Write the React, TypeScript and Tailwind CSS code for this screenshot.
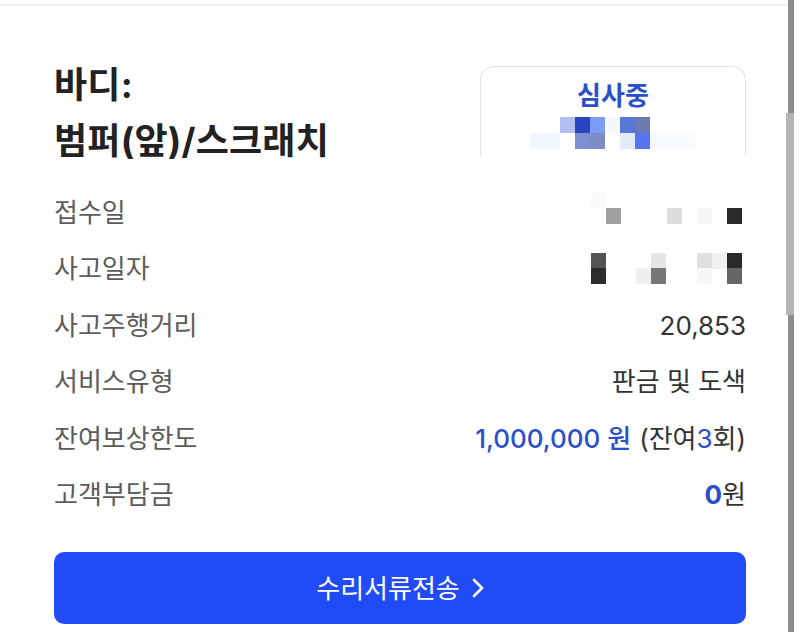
import React from "react";

type Block = [number, number, string];

const font = {
  fontFamily: 'Inter, "Noto Sans CJK KR", "Noto Sans", sans-serif',
};

const statusBlocks: Block[] = [
  [49, 16, "#f1f7ff"],
  [64, 16, "#f1f7ff"],
  [79, 0, "#b3bff0"],
  [94, 0, "#2b45c0"],
  [109, 0, "#7b9df2"],
  [94, 16, "#7d8ed2"],
  [109, 16, "#7c8cc4"],
  [124, 0, "#f5f8ff"],
  [139, 0, "#5a76d6"],
  [154, 0, "#6b7aaf"],
  [139, 16, "#e3eaf8"],
  [154, 16, "#5a73f2"],
  [169, 16, "#f6f9fe"],
  [184, 16, "#f6f9fe"],
  [199, 16, "#f8fafe"],
];

const receiptBlocks: Block[] = [
  [5, 9, "#f9f9f9"],
  [20, 24, "#a0a0a0"],
  [81, 24, "#dddddd"],
  [111, 24, "#f7f7f7"],
  [141, 24, "#2a2a2a"],
];

const accidentBlocks: Block[] = [
  [5, 12, "#555555"],
  [5, 27, "#2c2c2c"],
  [50, 27, "#eeeeee"],
  [65, 12, "#e6e6e6"],
  [65, 27, "#777777"],
  [111, 12, "#e0e0e0"],
  [111, 27, "#f6f6f6"],
  [126, 12, "#f1f1f1"],
  [141, 12, "#2a2a2a"],
  [141, 27, "#666666"],
];

const Mosaic = ({
  blocks,
  width,
  height,
}: {
  blocks: Block[];
  width: number;
  height: number;
}) => (
  <svg width={width} height={height} className="block">
    {blocks.map(([x, y, c], i) => (
      <rect key={i} x={x} y={y} width={15} height={16} fill={c} />
    ))}
  </svg>
);

const Row = ({
  label,
  children,
}: {
  label: string;
  children: React.ReactNode;
}) => (
  <div className="flex h-[56.5px] items-center justify-between">
    <span className="text-[26px] text-[#5c5c5c]">{label}</span>
    <div className="flex h-full items-center text-[26px] text-[#333]">
      {children}
    </div>
  </div>
);

const App = () => {
  return (
    <div className="flex h-[632px] w-full bg-white" style={font}>
      <div className="w-[788px] shrink-0">
        <div className="mt-[4px] h-[2px] bg-[#f0f0f0]" />
        <div className="pl-[54px] pr-[42px] pt-[51px]">
          <div className="flex items-start justify-between">
            <h1 className="text-[36px] font-bold leading-[56px] tracking-[0.2px] text-[#222]">
              바디:
              <br />
              범퍼(앞)/스크래치
            </h1>
            <div className="mt-[9px] h-[90px] w-[266px] rounded-t-[14px] border border-b-0 border-[#e3e3e3] pt-[14px]">
              <div className="text-center text-[26px] font-bold leading-[30px] text-[#2b4fc8]">
                심사중
              </div>
              <div className="mt-[6px]">
                <Mosaic blocks={statusBlocks} width={264} height={32} />
              </div>
            </div>
          </div>

          <div className="mt-[15px]">
            <Row label="접수일">
              <Mosaic blocks={receiptBlocks} width={160} height={56} />
            </Row>
            <Row label="사고일자">
              <Mosaic blocks={accidentBlocks} width={160} height={56} />
            </Row>
            <Row label="사고주행거리">20,853</Row>
            <Row label="서비스유형">판금 및 도색</Row>
            <Row label="잔여보상한도">
              <span className="font-medium text-[#2b4fc8]">1,000,000 원</span>
              <span className="ml-[8px]">
                (잔여<span className="text-[#2b4fc8]">3</span>회)
              </span>
            </Row>
            <Row label="고객부담금">
              <span className="font-bold text-[#2b4fc8]">0</span>원
            </Row>
          </div>

          <button className="mt-[29px] flex h-[72px] w-full items-center justify-center gap-[12px] rounded-[10px] bg-[#214cf5] text-[26px] text-white">
            수리서류전송
            <svg width="12" height="20" viewBox="0 0 12 20">
              <polyline
                points="2,2 10,10 2,18"
                fill="none"
                stroke="white"
                strokeWidth="2.6"
                strokeLinecap="round"
                strokeLinejoin="round"
              />
            </svg>
          </button>
        </div>
      </div>
      {/* scrollbar strip on the right edge */}
      <div className="flex h-[632px] w-[6px] shrink-0 flex-col bg-[#8c8c8c]">
        <div className="ml-[-2px] mt-[113px] h-[202px] w-[8px] bg-[#b4b4b4]" />
      </div>
    </div>
  );
};

export default App;
